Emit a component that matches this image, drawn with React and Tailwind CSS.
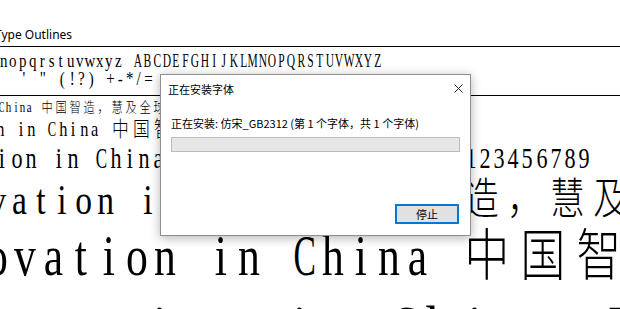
import React from "react";

// Font preview window with the Windows "installing font" dialog on top.

const SAMPLE = "Innovation in China 中国智造，慧及全球 0123456789";

const isWide = (c) => c.charCodeAt(0) > 0x2e7f;

// FangSong style: half-width cells for latin, full-width for CJK
function Glyph({ c }) {
  if (isWide(c)) {
    return (
      <span className="inline-flex w-[1em] justify-center leading-[0.8] font-['Noto_Sans_CJK_SC',sans-serif] font-light">
        <span className="inline-block scale-x-[0.8]">{c}</span>
      </span>
    );
  }
  const upper = c >= "A" && c <= "Z";
  return (
    <span className="inline-flex w-[0.5em] justify-center">
      <span className={upper ? "inline-block scale-x-[0.6]" : "inline-block scale-x-[0.78]"}>
        {c}
      </span>
    </span>
  );
}

function FontLine({ text, className }) {
  return (
    <div className={"whitespace-nowrap font-['Liberation_Serif',serif] text-black " + className}>
      {Array.from(text).map((c, i) => (
        <Glyph key={i} c={c} />
      ))}
    </div>
  );
}

function InstallDialog() {
  return (
    <div className="absolute left-[160px] top-[74px] flex h-[162px] w-[311px] flex-col border border-[#8f8f8f] bg-white shadow-[0_2px_10px_rgba(0,0,0,0.3)] font-['Noto_Sans_CJK_SC','Noto_Sans',sans-serif] text-black">
      <div className="flex h-[27px] items-center justify-between pl-[7px] pr-[7px]">
        <span className="text-[11px] leading-[14px]">正在安装字体</span>
        <svg width="9" height="9" viewBox="0 0 9 9" className="block">
          <path d="M0.5 0.5 L8.5 8.5 M8.5 0.5 L0.5 8.5" stroke="#222" strokeWidth="1" />
        </svg>
      </div>
      <div className="px-[10px] pt-[14px]">
        <p className="whitespace-nowrap text-[11px] leading-[14px]">
          正在安装: 仿宋_GB2312 (第 1 个字体，共 1 个字体)
        </p>
        <div className="mt-[7px] h-[15px] w-[289px] border border-[#bcbcbc] bg-[#e6e6e6]" />
      </div>
      <div className="mt-[52px] flex justify-end pr-[11px]">
        <button className="flex h-[20px] w-[64px] items-center justify-center border-2 border-[#0078d7] bg-[#e1e1e1] text-[11px] leading-none">
          停止
        </button>
      </div>
    </div>
  );
}

export default function App() {
  return (
    <div className="relative h-[309px] w-[620px] overflow-hidden bg-white">
      <div className="h-[46px] pt-[27px]">
        <div className="ml-[-5px] whitespace-nowrap font-['Noto_Sans',sans-serif] text-[12px] leading-[16px] text-black">
          Type Outlines
        </div>
      </div>
      <div className="h-px bg-black" />

      <div className="pt-[5px] pb-[7px]">
        <FontLine
          text="abcdefghijklmnopqrstuvwxyz ABCDEFGHIJKLMNOPQRSTUVWXYZ"
          className="ml-[-126px] h-[18px] text-[19.2px] leading-[18px]"
        />
        <FontLine text={"  ' \" (!?) +-*/="} className="h-[18px] text-[19.2px] leading-[18px]" />
      </div>
      <div className="h-px bg-black" />

      <div className="pt-[2px]">
        <FontLine text={SAMPLE} className="ml-[-100px] h-[20px] text-[14px] leading-[20px]" />
        <FontLine text={SAMPLE} className="ml-[-100px] h-[22px] text-[21px] leading-[22px]" />
        <FontLine text={SAMPLE} className="ml-[-104px] h-[37px] text-[28.4px] leading-[37px]" />
        <FontLine text={SAMPLE} className="ml-[-99px] h-[45px] text-[43px] leading-[45px]" />
        <FontLine text={SAMPLE} className="ml-[-101px] h-[68px] text-[56px] leading-[68px]" />
        <FontLine text={SAMPLE} className="ml-[-103px] h-[82px] text-[70px] leading-[82px]" />
      </div>

      <InstallDialog />
    </div>
  );
}
